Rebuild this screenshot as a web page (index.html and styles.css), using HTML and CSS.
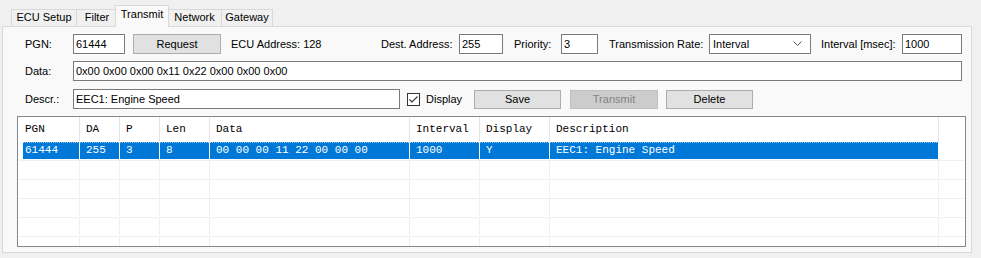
FILE: index.html
```html
<!DOCTYPE html>
<html lang="en">
<head>
  <meta charset="UTF-8">
  <title>Transmit</title>
  <link rel="stylesheet" href="styles.css">
</head>
<body>

<div class="tabs">
  <div class="tab">ECU Setup</div>
  <div class="tab">Filter</div>
  <div class="tab active">Transmit</div>
  <div class="tab">Network</div>
  <div class="tab">Gateway</div>
</div>

<div class="page">
  <div class="row">
    <span class="lbl first">PGN:</span>
    <input class="box w-pgn" type="text" value="61444">
    <div class="btn request">Request</div>
    <span class="lbl ecu">ECU Address: 128</span>
    <span class="lbl dest">Dest. Address:</span>
    <input class="box w-dest" type="text" value="255">
    <span class="lbl prio">Priority:</span>
    <input class="box w-prio" type="text" value="3">
    <span class="lbl rate">Transmission Rate:</span>
    <div class="combo">
      <span>Interval</span>
      <svg width="9" height="6" viewBox="0 0 9 6"><path d="M0.5 0.5 L4.5 4.5 L8.5 0.5" fill="none" stroke="#555" stroke-width="1"/></svg>
    </div>
    <span class="lbl ival">Interval [msec]:</span>
    <input class="box w-ival" type="text" value="1000">
  </div>

  <div class="row data-row">
    <span class="lbl first">Data:</span>
    <input class="box w-data" type="text" value="0x00 0x00 0x00 0x11 0x22 0x00 0x00 0x00">
  </div>

  <div class="row descr-row">
    <span class="lbl first">Descr.:</span>
    <input class="box w-descr" type="text" value="EEC1: Engine Speed">
    <span class="check">
      <svg width="13" height="13" viewBox="0 0 13 13"><rect x="0.5" y="0.5" width="12" height="12" fill="#fff" stroke="#333"/><path d="M2.5 6.5 L5 9 L10.5 3.5" fill="none" stroke="#333" stroke-width="1.1"/></svg>
    </span>
    <span class="lbl disp">Display</span>
    <div class="btn save">Save</div>
    <div class="btn transmit disabled">Transmit</div>
    <div class="btn delete">Delete</div>
  </div>

  <div class="list">
    <div class="grid-row head">
      <div class="c c1">PGN</div>
      <div class="c c2">DA</div>
      <div class="c c3">P</div>
      <div class="c c4">Len</div>
      <div class="c c5">Data</div>
      <div class="c c6">Interval</div>
      <div class="c c7">Display</div>
      <div class="c c8">Description</div>
      <div class="c fill"></div>
    </div>
    <div class="grid-row item sel">
      <div class="c c1">61444</div>
      <div class="c c2">255</div>
      <div class="c c3">3</div>
      <div class="c c4">8</div>
      <div class="c c5">00 00 00 11 22 00 00 00</div>
      <div class="c c6">1000</div>
      <div class="c c7">Y</div>
      <div class="c c8">EEC1: Engine Speed</div>
      <div class="c fill"></div>
    </div>
    <div class="grid-row item">
      <div class="c c1"></div><div class="c c2"></div><div class="c c3"></div><div class="c c4"></div>
      <div class="c c5"></div><div class="c c6"></div><div class="c c7"></div><div class="c c8"></div><div class="c fill"></div>
    </div>
    <div class="grid-row item">
      <div class="c c1"></div><div class="c c2"></div><div class="c c3"></div><div class="c c4"></div>
      <div class="c c5"></div><div class="c c6"></div><div class="c c7"></div><div class="c c8"></div><div class="c fill"></div>
    </div>
    <div class="grid-row item">
      <div class="c c1"></div><div class="c c2"></div><div class="c c3"></div><div class="c c4"></div>
      <div class="c c5"></div><div class="c c6"></div><div class="c c7"></div><div class="c c8"></div><div class="c fill"></div>
    </div>
    <div class="grid-row item">
      <div class="c c1"></div><div class="c c2"></div><div class="c c3"></div><div class="c c4"></div>
      <div class="c c5"></div><div class="c c6"></div><div class="c c7"></div><div class="c c8"></div><div class="c fill"></div>
    </div>
    <div class="grid-row item">
      <div class="c c1"></div><div class="c c2"></div><div class="c c3"></div><div class="c c4"></div>
      <div class="c c5"></div><div class="c c6"></div><div class="c c7"></div><div class="c c8"></div><div class="c fill"></div>
    </div>
  </div>
</div>

</body>
</html>
```

FILE: styles.css
```css
body {
  margin: 0;
  background: #f0f0f0;
  color: #000;
  font-family: "Liberation Sans", Arial, sans-serif;
  font-size: 11px;
}

/* tab strip */
.tabs {
  display: flex;
  align-items: flex-end;
  height: 26px;
  padding-left: 11px;
}
.tab {
  box-sizing: border-box;
  height: 17px;
  line-height: 15px;
  text-align: center;
  background: #f0f0f0;
  border: 1px solid #d9d9d9;
  border-bottom: none;
  margin-right: -1px;
}
.tab:nth-child(1) { width: 66px; }
.tab:nth-child(2) { width: 42px; }
.tab:nth-child(4) { width: 55px; }
.tab:nth-child(5) { width: 52px; }
.tab.active {
  position: relative;
  z-index: 1;
  width: 54px;
  height: 22px;
  line-height: 17px;
  margin: 0 -2px -1px -2px;
  background: #f9f9f9;
}

/* tab page */
.page {
  box-sizing: border-box;
  width: 970px;
  height: 227px;
  margin-left: 2px;
  padding: 7px 0 0 14px;
  background: #f9f9f9;
  border: 1px solid #d9d9d9;
}
.row {
  display: flex;
  align-items: center;
  height: 20px;
}
.data-row { margin-top: 7px; }
.descr-row { margin-top: 8px; }

.lbl {
  box-sizing: border-box;
  white-space: nowrap;
}
.lbl.first { width: 56px; padding-left: 8px; }
.lbl.ecu { width: 150px; margin-left: 10px; }
.lbl.dest { width: 78px; }
.lbl.prio { width: 47px; margin-left: 11px; }
.lbl.rate { width: 100px; margin-left: 11px; }
.lbl.ival { width: 81px; margin-left: 10px; }
.lbl.disp { width: 48px; margin-left: 6px; }

.box {
  box-sizing: border-box;
  height: 20px;
  margin: 0;
  padding: 0 2px;
  border: 1px solid #7a7a7a;
  background: #fff;
  color: #000;
  font-family: inherit;
  font-size: 11px;
  outline: none;
}
.w-pgn { width: 52px; }
.w-dest { width: 44px; }
.w-prio { width: 37px; }
.w-ival { width: 60px; }
.w-data { width: 889px; }
.w-descr { width: 327px; }

.combo {
  box-sizing: border-box;
  width: 102px;
  height: 20px;
  padding: 0 8px 0 3px;
  display: flex;
  align-items: center;
  justify-content: space-between;
  background: #fff;
  border: 1px solid #7a7a7a;
}
.combo svg { display: block; }

.check {
  display: flex;
  margin-left: 7px;
}

.btn {
  box-sizing: border-box;
  height: 20px;
  line-height: 18px;
  text-align: center;
  background: #e1e1e1;
  border: 1px solid #adadad;
}
.btn.request { width: 88px; margin-left: 8px; }
.btn.save { width: 87px; height: 19px; line-height: 17px; }
.btn.transmit { width: 88px; height: 19px; line-height: 17px; margin-left: 9px; }
.btn.delete { width: 87px; height: 19px; line-height: 17px; margin-left: 8px; }
.btn.disabled {
  background: #cccccc;
  border-color: #bfbfbf;
  color: #838383;
}

/* list view */
.list {
  box-sizing: border-box;
  width: 949px;
  height: 131px;
  margin-top: 7px;
  background: #fff;
  border: 1px solid #828790;
  overflow: hidden;
  font-family: "Liberation Mono", "Courier New", monospace;
  font-size: 11px;
}
.grid-row {
  display: flex;
}
.c {
  box-sizing: border-box;
  padding-left: 6px;
  white-space: nowrap;
  overflow: hidden;
}
.c1 { width: 62px; padding-left: 7px; }
.c2 { width: 40px; }
.c3 { width: 40px; }
.c4 { width: 50px; }
.c5 { width: 200px; }
.c6 { width: 70px; }
.c7 { width: 70px; }
.c8 { width: 389px; }
.fill { flex: 1; }

.head .c {
  height: 25px;
  line-height: 25px;
  border-right: 1px solid #e5e5e5;
}
.head .fill { border-right: none; }

.item {
  height: 18px;
  border-bottom: 1px solid #f0f0f0;
}
.item .c {
  height: 17px;
  line-height: 17px;
  border-right: 1px solid #f0f0f0;
}
.item .c1 {
  border-left: 5px solid #fff;
  padding-left: 2px;
}
.item .fill { border-right: none; }

.item.sel .c {
  color: #fff;
  background: #0078d7;
  border-right-color: #fff;
}
.item.sel .c1 { border-left-color: #fff; }
.item.sel .c:not(.fill) {
  background: repeating-linear-gradient(90deg, #9cc3e8 0 1px, #0078d7 1px 2px) top / 100% 1px no-repeat, #0078d7;
}
.item.sel .fill {
  background: #fff;
  border-right: none;
}
```
